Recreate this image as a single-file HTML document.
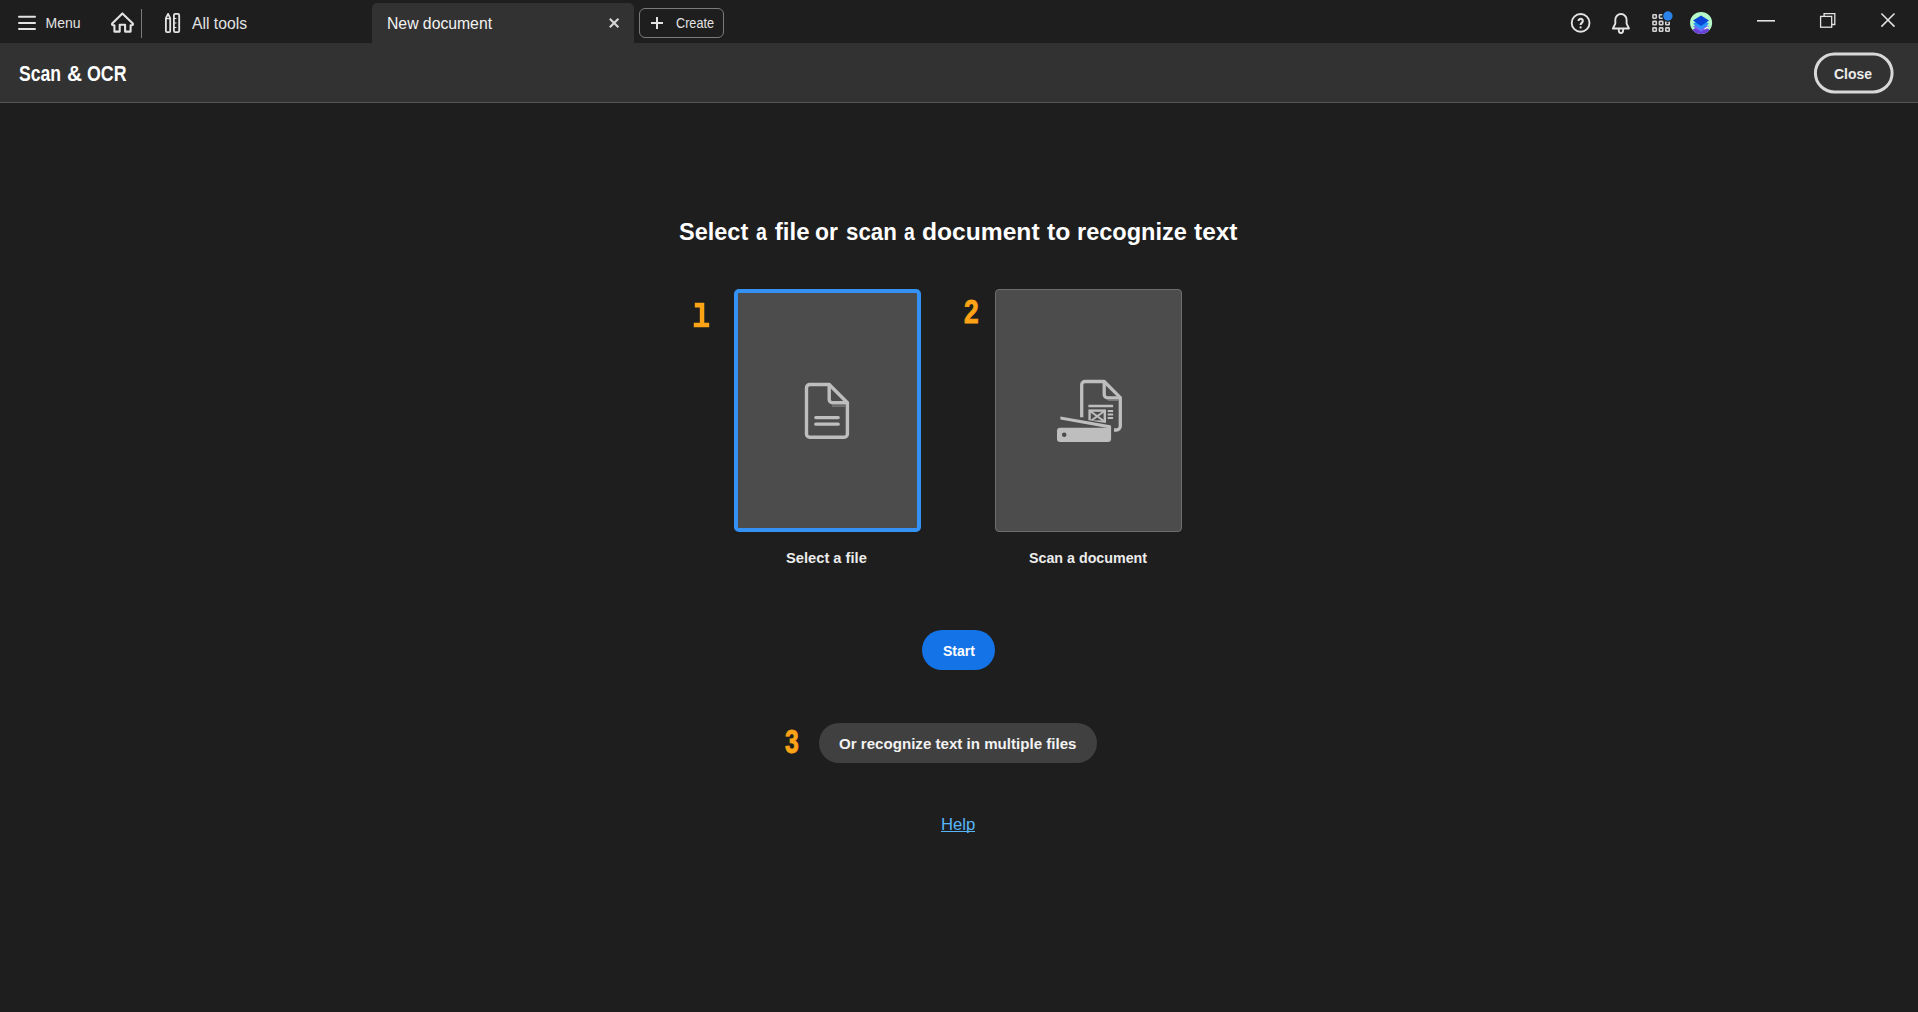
<!DOCTYPE html>
<html><head><meta charset="utf-8">
<style>
*{box-sizing:border-box;margin:0;padding:0}
html,body{width:1918px;height:1012px;overflow:hidden;background:#1e1e1e;font-family:"Liberation Sans",sans-serif;color:#e6e6e6}
.abs{position:absolute}
#tab{position:absolute;left:372px;top:3px;width:262px;height:40px;background:#323232;border-radius:5px 5px 0 0}
#hdr{position:absolute;left:0;top:43px;width:1918px;height:60px;background:#323232;border-bottom:1px solid #555}
.t{position:absolute;white-space:nowrap;line-height:1;transform-origin:0 0}
#ico{position:absolute;left:0;top:0;width:1918px;height:1012px}
</style></head><body>
<div id="tab"></div>
<div id="hdr"></div>
<div class="abs" id="sep" style="left:141px;top:9px;width:1px;height:29px;background:#7a7a7a"></div>
<div class="abs" id="card1" style="left:734px;top:289px;width:187px;height:243px;background:#4c4c4c;border:4px solid #3592f5;border-radius:5px"></div>
<div class="abs" id="card2" style="left:995px;top:289px;width:187px;height:243px;background:#4c4c4c;border:1px solid #6e6e6e;border-radius:4px"></div>
<div class="abs" id="startbtn" style="left:922px;top:630px;width:73px;height:40px;background:#1473e6;border-radius:20px"></div>
<div class="abs" id="multibtn" style="left:819px;top:723px;width:278px;height:40px;background:#404040;border-radius:20px"></div>
<div class="abs" id="helpul" style="left:941px;top:831px;width:34px;height:1px;background:#58b6f8"></div>

<svg id="ico" viewBox="0 0 1918 1012" fill="none">
<!--ICONS-->
<!-- hamburger -->
<g stroke="#e3e3e3" stroke-width="2" stroke-linecap="round">
<path d="M19 16.8H35M19 22.9H35M19 29.1H35"/>
</g>
<!-- home -->
<path d="M122.4 13.4 L112.2 23.5 Q111.5 25.2 113.3 25.2 H114.4 V31.6 H119.7 V24.8 H125.1 V31.6 H130.6 V25.2 H131.7 Q133.5 25.2 132.8 23.5 Z" stroke="#e3e3e3" stroke-width="2.1" stroke-linejoin="round"/>
<!-- all tools: pencil + ruler -->
<g stroke="#e3e3e3" stroke-width="1.8" stroke-linejoin="round">
<path d="M165.9 18.2 L168.05 13.9 L170.2 18.2 V31 a1.1 1.1 0 0 1 -1.1 1.1 h-2.1 a1.1 1.1 0 0 1 -1.1 -1.1 Z"/>
<path d="M166 18.6 H170.1" stroke-width="1.3"/>
<rect x="173.9" y="13.9" width="5.3" height="18.2" rx="1.3"/>
<path d="M174 18.5 H176.4 M174 23 H176.4 M174 27.5 H176.4" stroke-width="1.2"/>
</g>
<!-- tab close x -->
<path d="M609.8 18.7 L618.4 27.3 M618.4 18.7 L609.8 27.3" stroke="#d6d6d6" stroke-width="2.1"/>
<!-- create box + plus -->
<rect x="639.5" y="8.5" width="84" height="29" rx="5.5" stroke="#7b7b7b" stroke-width="1"/>
<path d="M651 23.1 H663 M657 17.1 V29.1" stroke="#e3e3e3" stroke-width="2"/>
<!-- help circle -->
<circle cx="1580.6" cy="22.9" r="8.9" stroke="#e3e3e3" stroke-width="1.9"/>
<path d="M1578.5 20.9 a2.15 2.15 0 1 1 3.5 1.7 c-.95 .7 -1.4 1.2 -1.4 2.2 v.3" stroke="#e3e3e3" stroke-width="2.1" stroke-linecap="butt"/>
<circle cx="1580.6" cy="27.4" r="1.1" fill="#e3e3e3"/>
<!-- bell -->
<g stroke="#e3e3e3" stroke-width="1.9" stroke-linejoin="round" stroke-linecap="round">
<path d="M1612.9 28.5 L1615.3 23.6 V19.7 a5.65 5.65 0 0 1 11.3 0 V23.6 L1629 28.5 Z"/>
<path d="M1618.8 29.6 v1.2 a2.15 2.15 0 0 0 4.3 0 v-1.2"/>
</g>
<!-- grid -->
<g stroke="#d2d2d2" stroke-width="1.6">
<rect x="1652.9" y="14.8" width="3.4" height="3.4" rx="0.6"/><rect x="1659.4" y="14.8" width="3.4" height="3.4" rx="0.6"/><rect x="1665.8" y="14.8" width="3.4" height="3.4" rx="0.6"/>
<rect x="1652.9" y="21.4" width="3.4" height="3.4" rx="0.6"/><rect x="1659.4" y="21.4" width="3.4" height="3.4" rx="0.6"/><rect x="1665.8" y="21.4" width="3.4" height="3.4" rx="0.6"/>
<rect x="1652.9" y="27.9" width="3.4" height="3.4" rx="0.6"/><rect x="1659.4" y="27.9" width="3.4" height="3.4" rx="0.6"/><rect x="1665.8" y="27.9" width="3.4" height="3.4" rx="0.6"/>
</g>
<circle cx="1667.9" cy="16.05" r="5.9" fill="#1e1e1e"/>
<circle cx="1667.9" cy="16.05" r="4.7" fill="#2b83ea"/>
<!-- avatar -->
<clipPath id="avc"><circle cx="1701.1" cy="22.9" r="11"/></clipPath>
<g clip-path="url(#avc)">
<rect x="1689" y="11" width="24" height="24" fill="#b6f8c9"/>
<path d="M1693 29.5 L1701 24.5 L1709 29.5 L1709 36 L1693 36 Z" fill="#6a3fd8"/>
<path d="M1693 26.5 L1701 21.5 L1709 26.5 L1701 31.8 Z" fill="#6b6ff5"/>
<path d="M1693 23.8 L1701 18.8 L1709 23.8 L1701 29 Z" fill="#2196f8"/>
<path d="M1693 20.6 L1701 15.4 L1709 20.6 L1701 26 Z" fill="#0a45d8"/>
<path d="M1704.5 29.2 L1708 26.8" stroke="#fff" stroke-width="1.2"/>
</g>
<!-- window controls -->
<path d="M1757 20.8 H1775" stroke="#e3e3e3" stroke-width="1.6"/>
<g stroke="#e3e3e3" stroke-width="1.3">
<rect x="1820.6" y="16.4" width="11.1" height="10.8"/>
<path d="M1824.1 16.4 V13.6 H1834.8 V24.5 H1831.7"/>
</g>
<path d="M1881.4 13.5 L1894.5 26.6 M1894.5 13.5 L1881.4 26.6" stroke="#e3e3e3" stroke-width="1.5"/>
<!-- close button ring -->
<rect x="1815.4" y="54" width="76.7" height="38" rx="19" stroke="#d8d8d8" stroke-width="3"/>
<!-- number 1 -->
<path d="M694.8 302.8 H704.3 V322.7 H709.2 V327.3 H693.8 V322.7 H699.8 V307.6 H694.8 Z" fill="#fca316"/>
<!-- file icon card1 -->
<g stroke="#bebebe" stroke-width="3.4" stroke-linejoin="round" stroke-linecap="round">
<path d="M809.8 384.5 H829.2 L847.4 402.8 V434 a3.3 3.3 0 0 1 -3.3 3.3 H809.8 a3.3 3.3 0 0 1 -3.3 -3.3 V387.8 a3.3 3.3 0 0 1 3.3 -3.3 Z"/>
<path d="M829.2 384.8 V399.4 a3.3 3.3 0 0 0 3.3 3.3 H847"/>
<path d="M815.8 417.6 H838.2 M815.8 424.2 H838.2" stroke-width="3.3"/>
<path d="M832 406.1 H845.2" stroke="#8a8a8a" stroke-width="1.1" stroke-linecap="butt"/>
</g>
<!-- scanner icon card2 -->
<g stroke="#bebebe" stroke-width="3.3" stroke-linejoin="round" stroke-linecap="round">
<path d="M1081.7 417.2 V384.8 a3.3 3.3 0 0 1 3.3 -3.3 H1104.2 L1120.3 397.6 V426 a4 4 0 0 1 -4 4 H1114" stroke-linecap="butt"/>
<path d="M1104.2 381.8 V394.6 a3.3 3.3 0 0 0 3.3 3.3 H1120"/>
</g>
<g stroke="#bebebe" stroke-linecap="butt">
<path d="M1088.4 406 H1113.1" stroke-width="2.5"/>
<path d="M1107.7 410.9 H1113.1 M1107.7 414.4 H1113.1 M1107.7 417.9 H1113.1" stroke-width="2"/>
<rect x="1089.6" y="410.6" width="15.2" height="11" stroke-width="2.4"/>
<path d="M1090 411 L1104.5 421.5 M1104.5 411 L1090 421.5" stroke-width="2"/>
</g>
<!-- lid w/ gap -->
<path d="M1060.4 416.4 L1110.3 425.2 Q1111.1 425.4 1111.1 426.4 V431 L1107.5 427.9 L1060.4 419.4 Z" fill="#bebebe" stroke="#4c4c4c" stroke-width="2.4" paint-order="stroke" stroke-linejoin="round"/>
<rect x="1057" y="427.8" width="54.1" height="14.2" rx="3.2" fill="#bebebe"/>
<path d="M1108 400.2 H1118.6" stroke="#8a8a8a" stroke-width="1.1"/>
<circle cx="1064.2" cy="434.7" r="2.3" fill="#4c4c4c"/>
</svg>
<div class="t" id="menu" style="left:45.50px;top:15.90px;font-size:14px;font-weight:normal;color:#e3e3e3;transform:scaleX(1.0000)">Menu</div>
<div class="t" id="alltools" style="left:192.00px;top:15.60px;font-size:16px;font-weight:normal;color:#e3e3e3;transform:scaleX(0.9821)">All tools</div>
<div class="t" id="newdoc" style="left:386.72px;top:16.10px;font-size:16px;font-weight:normal;color:#f2f2f2;transform:scaleX(0.9840)">New document</div>
<div class="t" id="create" style="left:676.00px;top:15.80px;font-size:14px;font-weight:normal;color:#e3e3e3;transform:scaleX(0.9048)">Create</div>
<div class="t" id="scan" style="left:19.30px;top:62.80px;font-size:22px;font-weight:bold;color:#ffffff;transform:scaleX(0.8000)">Scan</div>
<div class="t" id="amp" style="left:66.55px;top:62.80px;font-size:22px;font-weight:bold;color:#ffffff;transform:scaleX(0.9467)">&amp;</div>
<div class="t" id="ocr" style="left:87.10px;top:62.80px;font-size:22px;font-weight:bold;color:#ffffff;transform:scaleX(0.8082)">OCR</div>
<div class="t" id="closetxt" style="left:1834.20px;top:65.80px;font-size:15px;font-weight:bold;color:#ececec;transform:scaleX(0.9293)">Close</div>
<div class="t" id="lab1" style="left:786.00px;top:549.80px;font-size:15px;font-weight:bold;color:#ececec;transform:scaleX(0.9795)">Select a file</div>
<div class="t" id="lab2" style="left:1029.10px;top:549.80px;font-size:15px;font-weight:bold;color:#ececec;transform:scaleX(0.9504)">Scan a document</div>
<div class="t" id="starttxt" style="left:942.50px;top:642.90px;font-size:15px;font-weight:bold;color:#ffffff;transform:scaleX(0.9343)">Start</div>
<div class="t" id="multitxt" style="left:839.10px;top:736.00px;font-size:15px;font-weight:bold;color:#f2f2f2;transform:scaleX(1.0068)">Or recognize text in multiple files</div>
<div class="t" id="help" style="left:940.69px;top:815.90px;font-size:16.5px;font-weight:normal;color:#58b6f8;transform:scaleX(1.0121)">Help</div>
<div class="t" id="n2" style="left:963.70px;top:294.80px;font-size:33px;font-weight:bold;color:#fca316;transform:scaleX(0.8000);-webkit-text-stroke:0.9px #fca316">2</div>
<div class="t" id="n3" style="left:784.70px;top:725.10px;font-size:33px;font-weight:bold;color:#fca316;transform:scaleX(0.7500);-webkit-text-stroke:0.9px #fca316">3</div>
<div class="t" id="tw0" style="left:678.92px;top:219.80px;font-size:24px;font-weight:bold;color:#ffffff;transform:scaleX(0.9786)">Select</div>
<div class="t" id="tw1" style="left:755.90px;top:219.80px;font-size:24px;font-weight:bold;color:#ffffff;transform:scaleX(0.8143)">a</div>
<div class="t" id="tw2" style="left:774.80px;top:219.80px;font-size:24px;font-weight:bold;color:#ffffff;transform:scaleX(1.0000)">file</div>
<div class="t" id="tw3" style="left:815.45px;top:219.80px;font-size:24px;font-weight:bold;color:#ffffff;transform:scaleX(0.9522)">or</div>
<div class="t" id="tw4" style="left:845.67px;top:219.80px;font-size:24px;font-weight:bold;color:#ffffff;transform:scaleX(0.9283)">scan</div>
<div class="t" id="tw5" style="left:904.10px;top:219.80px;font-size:24px;font-weight:bold;color:#ffffff;transform:scaleX(0.8071)">a</div>
<div class="t" id="tw6" style="left:921.97px;top:219.80px;font-size:24px;font-weight:bold;color:#ffffff;transform:scaleX(1.0254)">document</div>
<div class="t" id="tw7" style="left:1046.70px;top:219.80px;font-size:24px;font-weight:bold;color:#ffffff;transform:scaleX(1.0318)">to</div>
<div class="t" id="tw8" style="left:1076.72px;top:219.80px;font-size:24px;font-weight:bold;color:#ffffff;transform:scaleX(0.9802)">recognize</div>
<div class="t" id="tw9" style="left:1194.10px;top:219.80px;font-size:24px;font-weight:bold;color:#ffffff;transform:scaleX(1.0186)">text</div>
</body></html>
